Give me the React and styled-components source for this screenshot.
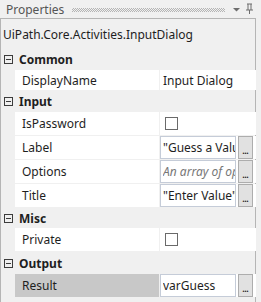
import styled, { createGlobalStyle } from "styled-components"

const GlobalStyle = createGlobalStyle`
  html, body { margin: 0; padding: 0; background: #f0f0f0; }
  body { font-family: "Noto Sans", "Open Sans", sans-serif; font-size: 12px; color: #1e1e1e; }
`

const Panel = styled.div`
  width: 261px;
  height: 302px;
  background: #f0f0f0;
  display: flex;
  flex-direction: column;
  overflow: hidden;
`

const TitleBar = styled.div`
  height: 18px;
  display: flex;
  align-items: center;
  padding: 0 8px 0 6px;
  gap: 8px;
  color: #555;
  font-size: 12px;
`

const Grip = styled.div`
  flex: 1;
  height: 4px;
  margin-top: 1px;
  background-image: conic-gradient(#b4b4b4 25%, transparent 0 50%, #b4b4b4 0 75%, transparent 0);
  background-size: 2px 2px;
`

const Content = styled.div`
  flex: 1;
  width: 254px;
  border: 1px solid #b5b5b5;
  border-bottom: none;
  display: flex;
  flex-direction: column;
`

const ObjectName = styled.div`
  height: 30px;
  padding: 7px 0 0 2px;
  box-sizing: border-box;
  font-size: 12px;
`

const Category = styled.div`
  height: ${p => p.h}px;
  display: flex;
  align-items: center;
  font-weight: bold;
  gap: 6px;
  padding-left: 3px;
`

const Expander = styled.span`
  width: 7px;
  height: 7px;
  border: 1px solid #3c3c3c;
  position: relative;
  flex: none;
  &::after {
    content: "";
    position: absolute;
    left: 1px;
    right: 1px;
    top: 3px;
    height: 1px;
    background: #3c3c3c;
  }
`

const Row = styled.div`
  height: ${p => p.h}px;
  display: grid;
  grid-template-columns: 13px 144px 96px;
  column-gap: 1px;
  padding-bottom: 1px;
  box-sizing: border-box;
`

const NameCell = styled.div`
  grid-column: 2;
  background: ${p => (p.selected ? "#c8c8c8" : "#fff")};
  display: flex;
  align-items: center;
  padding-left: 7px;
`

const ValueCell = styled.div`
  background: #fff;
  display: flex;
  align-items: center;
  gap: 2px;
  padding-left: ${p => p.pad || 0}px;
`

const CheckBox = styled.span`
  width: 11px;
  height: 11px;
  border: 1px solid #6a6a6a;
  background: #fff;
`

const TextBox = styled.div`
  width: 72px;
  height: 21px;
  border: 1px solid #c5ccd8;
  background: #fff;
  padding-left: 2px;
  display: flex;
  align-items: center;
  font-style: ${p => (p.placeholder ? "italic" : "normal")};
  color: ${p => (p.placeholder ? "#777" : "#1e1e1e")};
`

const Clip = styled.span`
  display: block;
  width: 100%;
  overflow: hidden;
  white-space: nowrap;
`

const DotsButton = styled.div`
  width: 15px;
  height: 23px;
  box-sizing: border-box;
  border: 1px solid #adadad;
  background: #e1e1e1;
  display: flex;
  align-items: flex-end;
  justify-content: center;
  padding: 0 1px 3px 0;
  font-size: 11px;
  letter-spacing: -1px;
  line-height: 10px;
  color: #111;
`

function Section({ title, h = 21, children }) {
  return (
    <>
      <Category h={h}>
        <Expander />
        {title}
      </Category>
      {children}
    </>
  )
}

function PropRow({ name, h = 24, selected, children, pad }) {
  return (
    <Row h={h}>
      <NameCell selected={selected}>{name}</NameCell>
      <ValueCell pad={pad}>{children}</ValueCell>
    </Row>
  )
}

function Editor({ text, placeholder }) {
  return (
    <>
      <TextBox placeholder={placeholder}><Clip>{text}</Clip></TextBox>
      <DotsButton>...</DotsButton>
    </>
  )
}

export default function App() {
  return (
    <Panel>
      <GlobalStyle />
      <TitleBar>
        Properties
        <Grip />
        <svg width="20" height="12" viewBox="0 0 20 12">
          <path d="M0 5h7l-3.5 3.5z" fill="#6d6d6d" />
          <path d="M14 1h5M15 1v6M18 1v6M13 7h7M16.5 7v4" stroke="#6d6d6d" strokeWidth="1" fill="none" />
        </svg>
      </TitleBar>
      <Content>
        <ObjectName>UiPath.Core.Activities.InputDialog</ObjectName>
        <Section title="Common">
          <PropRow name="DisplayName" h={21} pad={3}>Input Dialog</PropRow>
        </Section>
        <Section title="Input">
          <PropRow name="IsPassword" pad={5}><CheckBox /></PropRow>
          <PropRow name="Label"><Editor text={'"Guess a Value"'} /></PropRow>
          <PropRow name="Options"><Editor text="An array of options" placeholder /></PropRow>
          <PropRow name="Title"><Editor text={'"Enter Value"'} /></PropRow>
        </Section>
        <Section title="Misc" h={20}>
          <PropRow name="Private" pad={5}><CheckBox /></PropRow>
        </Section>
        <Section title="Output" h={22}>
          <PropRow name="Result" selected><Editor text="varGuess" /></PropRow>
        </Section>
      </Content>
    </Panel>
  )
}
